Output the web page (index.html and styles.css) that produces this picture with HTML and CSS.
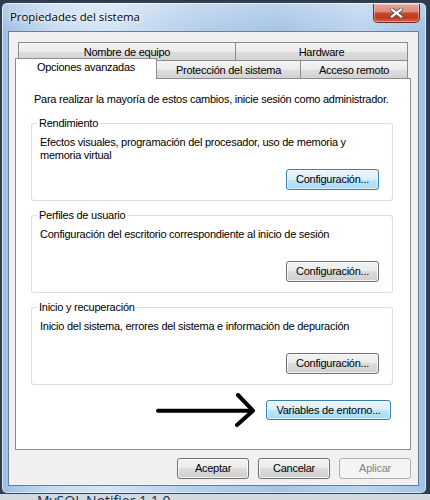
FILE: index.html
```html
<!DOCTYPE html>
<html lang="es">
<head>
<meta charset="utf-8">
<title>Propiedades del sistema</title>
<link rel="stylesheet" href="styles.css">
</head>
<body>
<div class="desktop">
  <div class="window">
    <div class="titlebar">
      <span class="title">Propiedades del sistema</span>
      <div class="close">
        <svg width="13" height="10" viewBox="0 0 13 10">
          <path d="M2 1.5 L11 8.5 M11 1.5 L2 8.5" stroke="#5a5a5a" stroke-width="4" stroke-linecap="square" fill="none"/>
          <path d="M2 1.5 L11 8.5 M11 1.5 L2 8.5" stroke="#ffffff" stroke-width="2.2" stroke-linecap="square" fill="none"/>
        </svg>
      </div>
    </div>
    <div class="client">
      <div class="tabs">
        <div class="tabrow back">
          <div class="tab t-nombre">Nombre de equipo</div>
          <div class="tab t-hw">Hardware</div>
        </div>
        <div class="tabrow front">
          <div class="tab selected t-opc">Opciones avanzadas</div>
          <div class="tab t-prot">Protección del sistema</div>
          <div class="tab t-acc">Acceso remoto</div>
        </div>
      </div>
      <div class="page">
        <p class="intro">Para realizar la mayoría de estos cambios, inicie sesión como administrador.</p>
        <div class="group">
          <span class="legend">Rendimiento</span>
          <p class="gtext">Efectos visuales, programación del procesador, uso de memoria y memoria virtual</p>
          <button class="btn btn-blue gbtn">Configuración...</button>
        </div>
        <div class="group">
          <span class="legend">Perfiles de usuario</span>
          <p class="gtext">Configuración del escritorio correspondiente al inicio de sesión</p>
          <button class="btn gbtn">Configuración...</button>
        </div>
        <div class="group">
          <span class="legend">Inicio y recuperación</span>
          <p class="gtext">Inicio del sistema, errores del sistema e información de depuración</p>
          <button class="btn gbtn">Configuración...</button>
        </div>
        <div class="envrow">
          <svg class="arrow" width="100" height="34" viewBox="0 0 100 34">
            <path d="M2 17.7 L96 17.7 M82 2 L97 17.7 L81 32" stroke="#000" stroke-width="4" stroke-linecap="round" stroke-linejoin="round" fill="none"/>
          </svg>
          <button class="btn btn-blue envbtn">Variables de entorno...</button>
        </div>
      </div>
      <div class="footer">
        <button class="btn fbtn">Aceptar</button>
        <button class="btn fbtn">Cancelar</button>
        <button class="btn fbtn disabled">Aplicar</button>
      </div>
    </div>
  </div>
  <div class="taskbit">MySQL Notifier 1.1.0</div>
</div>
</body>
</html>
```

FILE: styles.css
```css
* { box-sizing: border-box; }
html, body { margin: 0; padding: 0; }
body {
  width: 430px;
  height: 500px;
  overflow: hidden;
  background: #2d3b4c;
  font-family: "Liberation Sans", Arial, sans-serif;
  font-size: 11px;
  letter-spacing: -0.25px;
  color: #000;
}
p { margin: 0; }

.desktop {
  display: flex;
  flex-direction: column;
  height: 500px;
}

.window {
  margin: 2px 0 0 1px;
  width: 426px;
  height: 492px;
  flex: none;
  border: 1px solid #34465c;
  border-radius: 6px;
  background:
    linear-gradient(180deg, rgba(255,255,255,0.25) 0px, rgba(255,255,255,0) 28px),
    linear-gradient(90deg, #9ebfe3 0%, #c7dcf1 12%, #d3e4f5 25%, #b5cfea 45%, #a6c4e6 65%, #bcd4ee 85%, #a4c3e4 100%);
  box-shadow: inset 0 0 0 1px rgba(255,255,255,0.55);
  display: flex;
  flex-direction: column;
}

.titlebar {
  height: 28px;
  flex: none;
  display: flex;
  align-items: flex-start;
  padding: 0 6px 0 8px;
}
.title {
  font-family: "Open Sans", "Noto Sans", sans-serif;
  font-size: 11.4px;
  letter-spacing: 0;
  line-height: 16px;
  margin-top: 6px;
  color: #000;
  text-shadow: 0 0 6px rgba(255,255,255,0.9), 0 0 3px rgba(255,255,255,0.8);
}
.close {
  margin: 1px 0 0 auto;
  width: 47px;
  height: 19px;
  border: 1px solid #6a2e22;
  border-top: none;
  border-radius: 0 0 5px 5px;
  background: linear-gradient(180deg, #e8a597 0%, #dd8b7a 42%, #c8462b 52%, #c03a21 75%, #d5663f 100%);
  box-shadow: inset 0 0 0 1px rgba(255,220,210,0.45);
  display: flex;
  align-items: center;
  justify-content: center;
}

.client {
  margin: 0 7px 7px 6px;
  height: 455px;
  flex: none;
  border: 1px solid #687f99;
  background: #f0f0f0;
  padding: 10px 7px 6px 6px;
  display: flex;
  flex-direction: column;
}

.tabs {
  display: flex;
  flex-direction: column;
  flex: none;
}
.tabrow {
  display: flex;
  height: 18px;
}
.tabrow.back { margin-left: 3px; }
.tab {
  height: 18px;
  border: 1px solid #898c95;
  border-bottom: none;
  padding-top: 3px;
  line-height: 13px;
  text-align: center;
  white-space: nowrap;
  background: linear-gradient(180deg, #f3f3f3 0%, #ebebeb 50%, #dedede 50%, #d3d3d3 100%);
}
.t-nombre { width: 218px; }
.t-hw { width: 173px; margin-left: -1px; }
.t-opc { width: 142px; }
.t-prot { width: 145px; margin-left: -1px; }
.t-acc { width: 108px; margin-left: -1px; }
.tab.selected {
  height: 21px;
  margin: -2px 0 -1px 0;
  padding-top: 2px;
  background: #fff;
  position: relative;
  z-index: 1;
}

.page {
  height: 372px;
  flex: none;
  border: 1px solid #898c95;
  background: #fff;
  padding: 14px 17px 0 15px;
  display: flex;
  flex-direction: column;
}
.intro {
  margin-left: 3px;
  line-height: 13px;
}

.group {
  height: 78px;
  flex: none;
  margin-top: 14px;
  border: 1px solid #d5dfe5;
  border-radius: 3px;
  padding: 0 13px 10px 8px;
  display: flex;
  flex-direction: column;
}
.intro + .group { margin-top: 17px; }
.legend {
  align-self: flex-start;
  margin: -8px 0 0 -3px;
  padding: 0 2px;
  background: #fff;
  line-height: 14px;
}
.gtext {
  margin-top: 6px;
  line-height: 13px;
}

.btn {
  height: 21px;
  padding: 0;
  border: 1px solid #707070;
  border-radius: 3px;
  background: linear-gradient(180deg, #f2f2f2 0%, #ebebeb 50%, #dddddd 50%, #cfcfcf 100%);
  box-shadow: inset 0 0 0 1px rgba(255,255,255,0.75);
  font-family: "Liberation Sans", Arial, sans-serif;
  font-size: 11px;
  letter-spacing: -0.25px;
  line-height: 17px;
  color: #000;
  text-align: center;
}
.btn-blue {
  border-color: #3c7fb1;
  background: linear-gradient(180deg, #eaf6fd 0%, #d9f0fc 50%, #bee6fd 50%, #a7d9f5 100%);
  box-shadow: inset 0 0 0 1px rgba(255,255,255,0.6);
}
.gbtn {
  margin-top: auto;
  align-self: flex-end;
  width: 93px;
}

.envrow {
  margin: 8px 2px 0 0;
  height: 34px;
  flex: none;
  display: flex;
  justify-content: flex-end;
  align-items: center;
}
.arrow { margin-right: 10px; display: block; }
.envbtn { width: 125px; height: 20px; }

.footer {
  margin-top: 8px;
  display: flex;
  justify-content: flex-end;
  gap: 9px;
}
.fbtn { width: 72px; }
.fbtn.disabled {
  border-color: #adb2b5;
  background: #f4f4f4;
  box-shadow: none;
  color: #838383;
}

.taskbit {
  height: 6px;
  flex: none;
  overflow: hidden;
  background: #d3d9e0;
  padding-left: 37px;
  font-family: "Open Sans", "Noto Sans", sans-serif;
  font-size: 14px;
  letter-spacing: 0;
  line-height: 14px;
  color: #1c2f4d;
}
```
